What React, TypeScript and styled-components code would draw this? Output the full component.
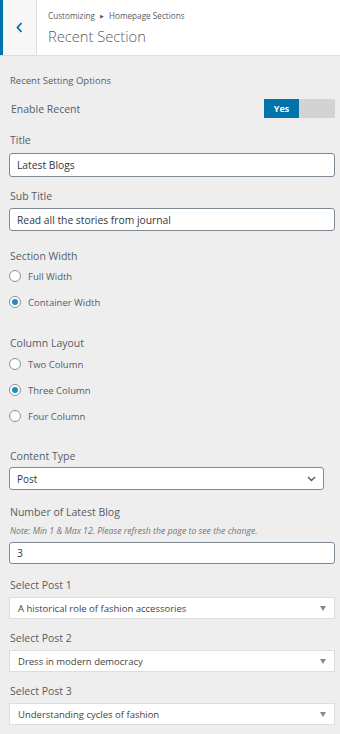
import { createGlobalStyle, styled } from 'styled-components';

const GlobalStyle = createGlobalStyle`
  html, body {
    margin: 0;
    padding: 0;
    background: #eeeeee;
  }
  body {
    font-family: 'Open Sans', 'Noto Sans', sans-serif;
    color: #555d66;
  }
`;

const Page = styled.div`
  width: 340px;
  min-height: 734px;
  background: #eeeeee;
`;

const Header = styled.header`
  display: flex;
  height: 55px;
  background: #ffffff;
  border-bottom: 1px solid #dddddd;
`;

const BackButton = styled.button`
  display: flex;
  align-items: center;
  justify-content: center;
  width: 37px;
  padding: 0;
  border: none;
  border-left: 3px solid #0073aa;
  border-right: 1px solid #dddddd;
  background: #f7f7f7;
  color: #0073aa;
  cursor: pointer;
`;

const HeaderText = styled.div`
  display: flex;
  flex-direction: column;
  justify-content: center;
  padding-left: 11px;
  gap: 3px;
`;

const Breadcrumb = styled.span`
  font-size: 8.2px;
  line-height: 13px;
  color: #555d66;
`;

const Arrow = styled.span`
  display: inline-block;
  margin: 0 5px;
  font-size: 5px;
  vertical-align: 1px;
`;

const Heading = styled.h1`
  margin: 0;
  font-size: 14.7px;
  line-height: 20px;
  font-weight: 300;
  color: #555d66;
`;

const Body = styled.div`
  display: flex;
  flex-direction: column;
  padding: 0 5px 0 9px;
`;

const Description = styled.p`
  margin: 18px 0 0 1px;
  font-size: 9.5px;
  line-height: 14px;
  color: #555d66;
`;

const Control = styled.div<{ $top: number }>`
  display: flex;
  flex-direction: column;
  margin-top: ${p => p.$top}px;
`;

const ToggleRow = styled.div`
  display: flex;
  align-items: center;
  justify-content: space-between;
  margin-top: 11px;
  padding-left: 1px;
`;

const Label = styled.label<{ $gap?: number }>`
  display: block;
  margin: 0 0 ${p => p.$gap ?? 5}px 1px;
  font-size: 10.5px;
  line-height: 16px;
  color: #555d66;
`;

const Toggle = styled.div`
  display: flex;
  height: 19px;
`;

const ToggleOn = styled.span`
  display: flex;
  align-items: center;
  justify-content: center;
  width: 35px;
  background: #0073aa;
  color: #ffffff;
  font-size: 9px;
  font-weight: 700;
`;

const ToggleOff = styled.span`
  width: 36px;
  background: #d3d3d3;
`;

const TextInput = styled.input<{ $h?: number }>`
  box-sizing: border-box;
  width: 100%;
  height: ${p => p.$h ?? 24}px;
  margin: 0;
  padding: 0 7px;
  border: 1px solid #7e8993;
  border-radius: 3px;
  background: #ffffff;
  font-family: inherit;
  font-size: 10.3px;
  color: #32373c;
  outline: none;
`;

const RadioList = styled.div`
  display: flex;
  flex-direction: column;
  gap: 8px;
`;

const RadioRow = styled.label`
  display: flex;
  align-items: center;
  gap: 7px;
  height: 18px;
  font-size: 9.5px;
  color: #555d66;
`;

const RadioCircle = styled.span<{ $checked?: boolean }>`
  box-sizing: border-box;
  display: flex;
  align-items: center;
  justify-content: center;
  width: 12px;
  height: 12px;
  border: 1px solid #8c8f94;
  border-radius: 50%;
  background: #ffffff;

  &::after {
    content: '';
    display: ${p => (p.$checked ? 'block' : 'none')};
    width: 6px;
    height: 6px;
    border-radius: 50%;
    background: #1e8cbe;
  }
`;

const SelectBox = styled.div`
  box-sizing: border-box;
  display: flex;
  align-items: center;
  justify-content: space-between;
  width: 315px;
  height: 23px;
  padding: 0 7px 0 7px;
  border: 1px solid #7e8993;
  border-radius: 3px;
  background: #ffffff;
  font-size: 10px;
  color: #32373c;
`;

const Note = styled.span`
  display: block;
  margin: 0 0 4px 1px;
  font-size: 8.7px;
  line-height: 14px;
  font-style: italic;
  color: #72777c;
`;

const PostSelect = styled.div`
  box-sizing: border-box;
  display: flex;
  align-items: center;
  justify-content: space-between;
  width: 100%;
  height: 22px;
  padding: 0 8px 0 8px;
  border: 1px solid #dddddd;
  background: #ffffff;
  font-size: 9.5px;
  color: #444444;
`;

const Triangle = styled.span`
  width: 0;
  height: 0;
  border-left: 3px solid transparent;
  border-right: 3px solid transparent;
  border-top: 5px solid #888888;
`;

const Chevron = () => (
  <svg width="9" height="6" viewBox="0 0 9 6" fill="none">
    <path d="M1 1l3.5 3.5L8 1" stroke="#50575e" strokeWidth="1.4" />
  </svg>
);

const BackIcon = () => (
  <svg width="7" height="11" viewBox="0 0 7 11" fill="none">
    <path d="M5.5 1L1.5 5.5l4 4.5" stroke="currentColor" strokeWidth="1.8" />
  </svg>
);

const Radio = ({ label, checked }: { label: string; checked?: boolean }) => (
  <RadioRow>
    <RadioCircle $checked={checked} />
    {label}
  </RadioRow>
);

const posts = [
  'A historical role of fashion accessories',
  'Dress in modern democracy',
  'Understanding cycles of fashion',
];

export default function App() {
  return (
    <Page>
      <GlobalStyle />
      <Header>
        <BackButton type="button">
          <BackIcon />
        </BackButton>
        <HeaderText>
          <Breadcrumb>
            Customizing<Arrow>▶</Arrow>Homepage Sections
          </Breadcrumb>
          <Heading>Recent Section</Heading>
        </HeaderText>
      </Header>

      <Body>
        <Description>Recent Setting Options</Description>

        <ToggleRow>
          <Label $gap={0}>Enable Recent</Label>
          <Toggle>
            <ToggleOn>Yes</ToggleOn>
            <ToggleOff />
          </Toggle>
        </ToggleRow>

        <Control $top={14}>
          <Label>Title</Label>
          <TextInput defaultValue="Latest Blogs" />
        </Control>

        <Control $top={11}>
          <Label $gap={4}>Sub Title</Label>
          <TextInput defaultValue="Read all the stories from journal" $h={23} />
        </Control>

        <Control $top={17}>
          <Label $gap={3}>Section Width</Label>
          <RadioList>
            <Radio label="Full Width" />
            <Radio label="Container Width" checked />
          </RadioList>
        </Control>

        <Control $top={24}>
          <Label $gap={4}>Column Layout</Label>
          <RadioList>
            <Radio label="Two Column" />
            <Radio label="Three Column" checked />
            <Radio label="Four Column" />
          </RadioList>
        </Control>

        <Control $top={23}>
          <Label $gap={3}>Content Type</Label>
          <SelectBox>
            Post
            <Chevron />
          </SelectBox>
        </Control>

        <Control $top={14}>
          <Label $gap={4}>Number of Latest Blog</Label>
          <Note>Note: Min 1 &amp; Max 12. Please refresh the page to see the change.</Note>
          <TextInput defaultValue="3" $h={22} />
        </Control>

        {posts.map((post, i) => (
          <Control key={post} $top={i === 0 ? 13 : 11}>
            <Label $gap={4}>{`Select Post ${i + 1}`}</Label>
            <PostSelect>
              {post}
              <Triangle />
            </PostSelect>
          </Control>
        ))}
      </Body>
    </Page>
  );
}
